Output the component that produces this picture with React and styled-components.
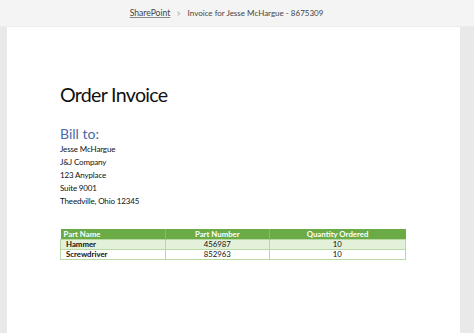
import React from 'react';
import styled, { createGlobalStyle } from 'styled-components';

const GlobalStyle = createGlobalStyle`
  html, body { margin: 0; padding: 0; background: #f4f4f4; }
  body { font-family: "Lato", "Open Sans", sans-serif; }
`;

const Screen = styled.div`
  width: 474px;
  height: 333px;
  display: flex;
  flex-direction: column;
  overflow: hidden;
  background: #f4f4f4;
`;

const TopBar = styled.div`
  height: 27px;
  display: flex;
  align-items: center;
  justify-content: center;
  gap: 4px;
  font-family: "Lato", "Open Sans", sans-serif;
  color: #444;
  padding-right: 21px;
  border-bottom: 1px solid #ececec;
  box-sizing: border-box;
`;

const Crumb = styled.a`
  color: #444;
  font-size: 8.6px;
  text-decoration: underline;
  text-decoration-color: #888;
`;

const Chevron = styled.span`
  color: #999;
  font-size: 9px;
  padding: 0 2px;
  transform: scaleX(0.7);
`;

const Current = styled.span`
  font-size: 8px;
`;

const Stage = styled.div`
  flex: 1;
  display: flex;
  background: #e9e9e9;
  padding: 0 14px 0 7px;
`;

const Page = styled.div`
  flex: 1;
  background: #fff;
  padding: 56px 0 0 53px;
`;

const Title = styled.h1`
  margin: 0;
  font-weight: 400;
  font-size: 19.6px;
  letter-spacing: -0.7px;
  color: #111;
  line-height: 24px;
`;

const BillTo = styled.h2`
  margin: 19px 0 1px;
  font-weight: 400;
  font-size: 14px;
  color: #4a6aa5;
  line-height: 16px;
`;

const Address = styled.div`
  font-size: 8px;
  line-height: 13px;
  letter-spacing: -0.15px;
  color: #111;
`;

const Table = styled.table`
  margin-top: 21px;
  width: 346px;
  border-collapse: collapse;
  font-size: 7.8px;
`;

const Th = styled.th`
  background: #6aab46;
  color: #fff;
  font-weight: 700;
  height: 10px;
  padding: 0 3px;
  line-height: 10px;
  text-align: ${p => (p.$left ? 'left' : 'center')};
  border-right: 1px solid #86bd68;
  &:last-child { border-right: none; }
`;

const Row = styled.tr`
  background: ${p => (p.$shade ? '#e3f0da' : '#fff')};
`;

const Td = styled.td`
  height: 9px;
  line-height: 9px;
  padding: 0 5px;
  color: #111;
  font-weight: ${p => (p.$bold ? 700 : 400)};
  text-align: ${p => (p.$left ? 'left' : 'center')};
  border: 1px solid #b8d9a4;
`;

const rows = [
  { name: 'Hammer', num: '456987', qty: '10' },
  { name: 'Screwdriver', num: '852963', qty: '10' },
];

export default function App() {
  return (
    <Screen>
      <GlobalStyle />
      <TopBar>
        <Crumb>SharePoint</Crumb>
        <Chevron>&gt;</Chevron>
        <Current>Invoice for Jesse McHargue - 8675309</Current>
      </TopBar>
      <Stage>
        <Page>
          <Title>Order Invoice</Title>
          <BillTo>Bill to:</BillTo>
          <Address>
            <div>Jesse McHargue</div>
            <div>J&amp;J Company</div>
            <div>123 Anyplace</div>
            <div>Suite 9001</div>
            <div>Theedville, Ohio 12345</div>
          </Address>
          <Table>
            <thead>
              <tr>
                <Th $left>Part Name</Th>
                <Th>Part Number</Th>
                <Th>Quantity Ordered</Th>
              </tr>
            </thead>
            <tbody>
              {rows.map((r, i) => (
                <Row key={r.num} $shade={i % 2 === 0}>
                  <Td $left $bold>{r.name}</Td>
                  <Td>{r.num}</Td>
                  <Td>{r.qty}</Td>
                </Row>
              ))}
            </tbody>
          </Table>
        </Page>
      </Stage>
    </Screen>
  );
}
